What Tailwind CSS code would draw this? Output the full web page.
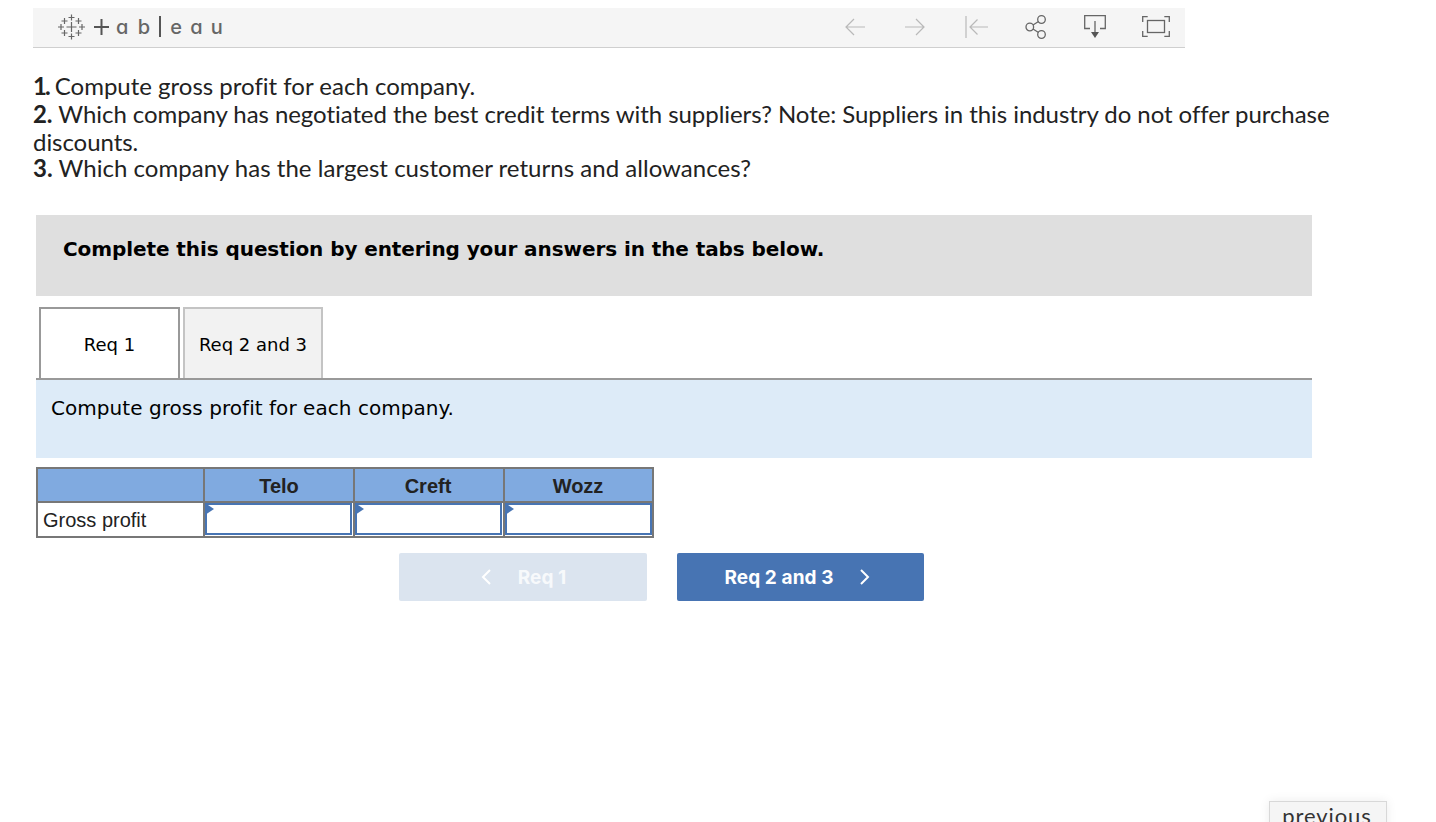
<!DOCTYPE html>
<html><head><meta charset="utf-8"><script src="https://cdn.jsdelivr.net/npm/@tailwindcss/browser@4"></script></head>
<body class="bg-white">
<div class="relative h-[822px] w-[1436px] overflow-hidden pt-2 pl-[33px] font-['Lato',sans-serif]">
  <header class="flex h-10 w-[1152px] items-center justify-between border-b border-[#cfcfcf] bg-[#f5f5f5]">
    <div class="flex items-center pb-[2px] pl-[25px] text-[#555]">
      <svg width="27" height="26" viewBox="0 0 27 26" fill="none" stroke="#666" stroke-width="1.200"><path d="M13.500 8v10M8.500 13h10M13.500 .5v6M10.500 3.500h6M13.500 19.500v6M10.500 22.500h6M6.500 4v6M3.500 7h6M20.500 4v6M17.500 7h6M6.500 16v6M3.500 19h6M20.500 16v6M17.500 19h6M3 10v6M0 13h6M24 10v6M21 13h6"/></svg>
      <svg class="ml-[9px]" width="15" height="16" viewBox="0 0 15 16" fill="none" stroke="#555" stroke-width="2"><path d="M7.500 0v16M0 8h15"/></svg>
      <span class="ml-[7px] font-['Inter',sans-serif] text-[20px] leading-none font-medium tracking-[9.500px] text-[#666] [font-feature-settings:'cv11']">ab</span>
      <span class="-ml-[0.500px] h-[21px] w-[2px] bg-[#555]"></span>
      <span class="ml-[9px] font-['Inter',sans-serif] text-[20px] leading-none font-medium tracking-[8.200px] text-[#666] [font-feature-settings:'cv11']">eau</span>
    </div>
    <div class="flex items-center pr-[15px] pb-[2px]">
      <svg width="20" height="18" viewBox="0 0 20 18" fill="none" stroke="#b9b9b9" stroke-width="1.200"><path d="M20 9H1M9 1 1 9l8 8"/></svg>
      <svg class="ml-[40px]" width="20" height="18" viewBox="0 0 20 18" fill="none" stroke="#b9b9b9" stroke-width="1.200"><path d="M0 9h19M11 1l8 8-8 8"/></svg>
      <svg class="ml-[40px]" width="23" height="22" viewBox="0 0 23 22" fill="none" stroke="#b9b9b9" stroke-width="1.200"><path d="M1 0v22M23 11H5M12.500 3.500 5 11l7.500 7.500"/></svg>
      <svg class="ml-[37px]" width="22" height="24" viewBox="0 0 22 24" fill="none" stroke="#666" stroke-width="1.300"><circle cx="4.800" cy="12" r="3.800"/><circle cx="16.500" cy="4.500" r="3.800"/><circle cx="16.500" cy="19.500" r="3.800"/><path d="m8 10 5.500-3.500M8 14l5.500 3.500"/></svg>
      <svg class="ml-[37px]" width="22" height="24" viewBox="0 0 22 24" fill="none" stroke="#666" stroke-width="1.300"><path d="M6 13.500H.7V.7h20.600v12.800H16M11 6v12"/><path d="M7 17h8l-4 6z" fill="#555" stroke="none"/></svg>
      <svg class="ml-[36px]" width="28" height="21" viewBox="0 0 28 21" fill="none" stroke="#666" stroke-width="1.300"><rect x="5.500" y="4.500" width="17" height="12"/><path d="M.7 6V.7h5M22.300 .7h5V6M.7 15v5.300h5M22.300 20.300h5V15"/></svg>
    </div>
  </header>

  <div class="mt-[24px] w-[1310px] text-[24px] leading-[28px] text-[#222] [font-variant-ligatures:none]">
    <p><b class="tracking-[-2px]">1.</b> Compute gross profit for each company.</p>
    <p class="tracking-[-0.060px]"><b>2.</b> Which company has negotiated the best credit terms with suppliers? Note: Suppliers in this industry do not offer purchase discounts.</p>
    <p class="-mt-[2px] tracking-[0.030px]"><b>3.</b> Which company has the largest customer returns and allowances?</p>
  </div>

  <div class="mt-[33px] ml-[3px] h-[81px] w-[1276px] bg-[#dfdfdf] pt-[21px] pl-[27px] font-['DejaVu_Sans',sans-serif] text-[20px] leading-[26px] font-bold tracking-[-0.080px] text-black">Complete this question by entering your answers in the tabs below.</div>

  <div class="mt-[11px] ml-[3px] w-[1276px]">
    <div class="flex h-[73px] items-start gap-[3px] border-b-2 border-[#999] pl-[3px] font-['DejaVu_Sans',sans-serif] text-[18px] text-black">
      <div class="flex h-[73px] w-[141px] items-center justify-center border-2 border-[#999] bg-white pt-[2px]">Req 1</div>
      <div class="flex h-[71px] w-[140px] items-center justify-center border-2 border-b-0 border-[#c4c4c4] bg-[#f2f2f2] pt-[2px]">Req 2 and 3</div>
    </div>
    <div class="h-[78px] bg-[#ddebf8] pt-[14px] pl-[15px] font-['DejaVu_Sans',sans-serif] text-[20px] leading-[28px] tracking-[0.050px] text-black">Compute gross profit for each company.</div>
  </div>

  <div class="mt-[9px] ml-[3px] grid h-[71px] w-[618px] grid-cols-[167px_150px_150px_147px] grid-rows-[34px_33px] border-2 border-[#777] font-['Liberation_Sans',sans-serif] text-[#222]">
    <div class="border-r-2 border-b-2 border-[#777] bg-[#80aae0]"></div>
    <div class="flex items-center justify-center border-r-2 border-b-2 border-[#777] bg-[#80aae0] pt-[2px] text-[20px] font-bold">Telo</div>
    <div class="flex items-center justify-center border-r-2 border-b-2 border-[#777] bg-[#80aae0] pt-[2px] pr-[2px] text-[20px] font-bold">Creft</div>
    <div class="flex items-center justify-center border-b-2 border-[#777] bg-[#80aae0] pt-[2px] pr-[1px] text-[20px] font-bold">Wozz</div>
    <div class="flex items-center border-r-2 border-[#777] pl-[5px] text-[20px]">Gross profit</div>
    <div class="relative border-r-2 border-[#777]"><div class="relative mr-[1px] mb-[1px] h-[32px] border-2 border-[#4774b3] bg-white"><span class="absolute -top-[2px] -left-[2px] border-y-[6px] border-l-[9px] border-y-transparent border-l-[#4774b3]"></span></div></div>
    <div class="relative border-r-2 border-[#777]"><div class="relative mr-[1px] mb-[1px] h-[32px] border-2 border-[#4774b3] bg-white"><span class="absolute -top-[2px] -left-[2px] border-y-[6px] border-l-[9px] border-y-transparent border-l-[#4774b3]"></span></div></div>
    <div class="relative"><div class="relative mb-[1px] h-[32px] border-2 border-[#4774b3] bg-white"><span class="absolute -top-[2px] -left-[2px] border-y-[6px] border-l-[9px] border-y-transparent border-l-[#4774b3]"></span></div></div>
  </div>

  <div class="mt-[15px] ml-[366px] flex gap-[30px] font-['Inter',sans-serif] text-[19px] font-bold tracking-[0.100px] text-white">
    <div class="flex h-12 w-[248px] items-center justify-center rounded-[2px] bg-[#dbe4ef]">
      <svg class="mr-[26px]" width="12" height="18" viewBox="0 0 12 18" fill="none" stroke="#fff" stroke-width="2"><path d="M10 2 3 9l7 7"/></svg><span class="pt-[2px] opacity-80">Req 1</span>
    </div>
    <div class="flex h-12 w-[247px] items-center justify-center rounded-[2px] bg-[#4774b3] pr-[6px]">
      <span class="pt-[2px]">Req 2 and 3</span><svg class="ml-[25px]" width="12" height="18" viewBox="0 0 12 18" fill="none" stroke="#fff" stroke-width="2"><path d="m2 2 7 7-7 7"/></svg>
    </div>
  </div>

  <div class="absolute top-[801px] left-[1269px] h-[40px] w-[118px] border border-[#d8d8d8] bg-[#f5f5f5] pr-[2px] text-center font-['Lato',sans-serif] text-[22px] leading-[28px] tracking-[0.900px] text-[#333] shadow-[0_0_10px_rgba(0,0,0,0.08)]">previous</div>
</div>
</body></html>
